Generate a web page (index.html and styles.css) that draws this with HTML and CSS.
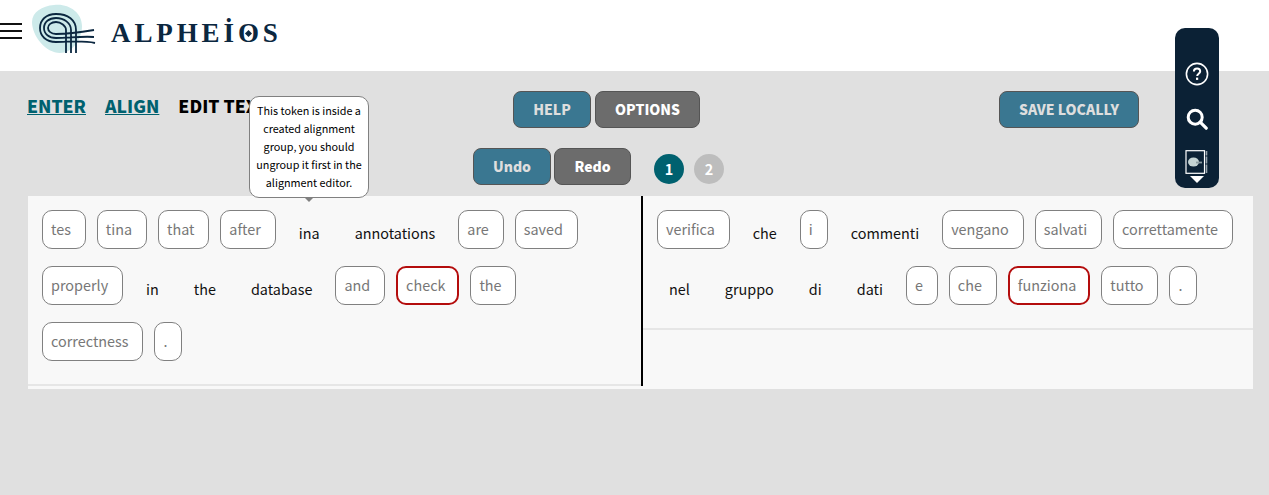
FILE: index.html
```html
<!DOCTYPE html>
<html lang="en">
<head>
<meta charset="utf-8">
<title>Alpheios</title>
<link rel="stylesheet" href="styles.css">
</head>
<body>
<header class="topbar">
  <div class="burger"><span></span><span></span><span></span></div>
  <svg class="logo-mark" width="66" height="56" viewBox="0 0 66 56" fill="none" stroke="#0b2740" stroke-width="1.8">
    <path d="M22 5C36 3 50 12 50 26C50 40 40 53 28 53C14 53 0 36 0 22C0 12 10 6 22 5z" fill="#cdeaea" stroke="none"/>
    <path d="M44 53V30C44 20 36 14 24 14C14 14 8 20 8 28C8 36 14 42 24 42C36 42 50 40 63 43"/>
    <path d="M39 53V30C39 23 32 18 24 18C17 18 12 22 12 28C12 34 17 38 24 38C36 38 50 36 62 37"/>
    <path d="M34 53V30C34 26 29 22 24 22C19 22 16 25 16 28C16 31 19 34 24 34C36 34 50 32 62 30"/>
  </svg>
  <div class="wordmark">ALPHEİ<span class="o-mark">O</span>S</div>
</header>

<main class="page">
  <div class="toolbar">
    <nav class="nav">
      <a class="nav-link" href="#">ENTER</a>
      <a class="nav-link" href="#">ALIGN</a>
      <span class="nav-current">EDIT TEXT</span>
    </nav>
    <div class="btn-group">
      <button class="btn btn-blue">HELP</button>
      <button class="btn btn-gray">OPTIONS</button>
    </div>
    <button class="btn btn-blue btn-save">SAVE LOCALLY</button>
  </div>

  <div class="subbar">
    <div class="btn-group narrow">
      <button class="btn btn-blue btn-undo">Undo</button>
      <button class="btn btn-gray btn-redo">Redo</button>
    </div>
    <div class="steps">
      <span class="step step-on">1</span>
      <span class="step step-off">2</span>
    </div>
  </div>

  <section class="editor">
    <div class="pane pane-left">
      <div class="tokens">
        <span class="tok box">tes</span>
        <span class="tok box">tina</span>
        <span class="tok box">that</span>
        <span class="tok box">after</span>
        <span class="tok plain">ina</span>
        <span class="tok plain">annotations</span>
        <span class="tok box">are</span>
        <span class="tok box">saved</span>
        <span class="tok box">properly</span>
        <span class="tok plain">in</span>
        <span class="tok plain">the</span>
        <span class="tok plain">database</span>
        <span class="tok box">and</span>
        <span class="tok box red">check</span>
        <span class="tok box">the</span>
        <span class="tok box">correctness</span>
        <span class="tok box">.</span>
      </div>
    </div>
    <div class="pane pane-right">
      <div class="tokens">
        <span class="tok box">verifica</span>
        <span class="tok plain">che</span>
        <span class="tok box">i</span>
        <span class="tok plain">commenti</span>
        <span class="tok box">vengano</span>
        <span class="tok box">salvati</span>
        <span class="tok box">correttamente</span>
        <span class="tok plain">nel</span>
        <span class="tok plain">gruppo</span>
        <span class="tok plain">di</span>
        <span class="tok plain">dati</span>
        <span class="tok box">e</span>
        <span class="tok box">che</span>
        <span class="tok box red">funziona</span>
        <span class="tok box">tutto</span>
        <span class="tok box">.</span>
      </div>
    </div>
  </section>
</main>

<div class="tooltip">This token is inside a created alignment group, you should ungroup it first in the alignment editor.</div>

<aside class="sidebar">
  <svg class="side-icon" width="24" height="24" viewBox="0 0 24 24" fill="none">
    <circle cx="12" cy="12" r="10.6" stroke="#fff" stroke-width="1.6"/>
    <path d="M8.9 9.6c0-2 1.4-3.1 3.2-3.1 1.9 0 3.1 1.1 3.1 2.8 0 2.4-3 2.5-3 4.7" stroke="#fff" stroke-width="2"/>
    <rect x="11" y="15.6" width="2.2" height="2.3" fill="#fff"/>
  </svg>
  <svg class="side-icon" width="22" height="22" viewBox="0 0 22 22" fill="none">
    <circle cx="9.2" cy="9.2" r="7" stroke="#fff" stroke-width="3"/>
    <path d="M14.2 14.2l6 6" stroke="#fff" stroke-width="3.2" stroke-linecap="round"/>
  </svg>
  <svg class="side-icon book" width="24" height="24" viewBox="0 0 24 24" fill="none">
    <rect x="1" y="0.7" width="18.5" height="22.6" stroke="#fff" stroke-width="1.2"/>
    <ellipse cx="8.5" cy="12" rx="5.5" ry="4.6" fill="#c4d3d3"/>
    <path d="M11 12.5h6" stroke="#8b9ba0" stroke-width="1.8"/>
    <path d="M21.5 1v22" stroke="#9aa6ae" stroke-width="1.6"/>
    <path d="M20 6h3M20 14h3" stroke="#0b2135" stroke-width="1"/>
  </svg>
  <span class="side-caret"></span>
</aside>
</body>
</html>
```
FILE: styles.css
```css
* { box-sizing: border-box; }
html, body { margin: 0; height: 100%; }
body {
  background: #e0e0e0;
  font-family: "Noto Sans CJK SC", "Noto Sans", sans-serif;
  color: #000;
  overflow: hidden;
}
.topbar {
  height: 71px;
  background: #fff;
  display: flex;
  align-items: flex-start;
}
.burger {
  width: 22px;
  margin-top: 23px;
  display: flex;
  flex-direction: column;
  gap: 5px;
}
.burger span { height: 2px; background: #111; display: block; }
.logo-mark { margin-left: 10px; flex: none; }
.wordmark {
  margin-left: 13px;
  margin-top: 14px;
  font-family: "Liberation Serif", serif;
  font-weight: 700;
  font-size: 27px;
  line-height: 38px;
  letter-spacing: 3.9px;
  color: #0b2740;
  white-space: nowrap;
}
.o-mark { position: relative; display: inline-block; }
.o-mark::after {
  content: "";
  position: absolute;
  left: 8px;
  top: 17px;
  width: 5px;
  height: 5px;
  background: #0b2740;
  transform: rotate(45deg);
}
.toolbar {
  display: flex;
  align-items: flex-start;
  padding: 20px 0 0 27px;
  height: 77px;
}
.nav {
  width: 486px;
  display: flex;
  gap: 19px;
  font-size: 17.5px;
  font-weight: 800;
  line-height: 30px;
  white-space: nowrap;
}
.nav-link { color: #00616f; text-decoration: underline; }
.btn-group { display: flex; gap: 4px; }
.btn {
  height: 37px;
  border: 1px solid #555;
  border-radius: 8px;
  font-family: inherit;
  font-weight: 900;
  font-size: 14px;
  padding: 0 0 2px;
}
.btn-blue { background: #3a7791; color: #dedede; width: 78px; }
.btn-gray { background: #6c6c6c; color: #fff; width: 105px; }
.btn-save { width: 140px; margin-left: 299px; }
.subbar {
  display: flex;
  align-items: flex-start;
  padding-left: 473px;
  height: 48px;
}
.narrow { gap: 3px; }
.btn-undo { width: 78px; }
.btn-redo { width: 77px; }
.steps { display: flex; gap: 10px; margin: 6px 0 0 23px; }
.step {
  width: 30px;
  height: 30px;
  border-radius: 50%;
  color: #fff;
  font-size: 14.4px;
  font-weight: 700;
  line-height: 30px;
  text-align: center;
}
.step-on { background: #00616f; }
.step-off { background: #bdbdbd; }
.editor {
  margin: 0 16px 0 28px;
  height: 193px;
  display: flex;
  background: #f8f8f8;
}
.pane { flex: none; }
.pane-left { width: 613px; height: 190px; }
.pane-right { flex: 1; border-left: 2px solid #000; height: 190px; }
.tokens {
  display: flex;
  flex-wrap: wrap;
  align-content: flex-start;
  gap: 17px 11px;
  padding: 14px 14px 0;
  border-bottom: 2px solid #e6e6e6;
}
.pane-left .tokens { height: 190px; }
.pane-right .tokens { height: 134px; }
.tok {
  height: 39px;
  font-size: 14.4px;
  line-height: 24px;
  white-space: nowrap;
}
.box {
  border: 1px solid #808080;
  border-radius: 10px;
  background: #fff;
  color: #777;
  padding: 6px 13.9px 0 8px;
}
.box.red { border: 2px solid #b40d0d; padding: 5px 12px 0 8px; }
.plain { padding: 11px 12px 0; color: #111; }
.tooltip {
  position: absolute;
  left: 249px;
  top: 96px;
  width: 120px;
  height: 102px;
  padding: 0 4px 2px;
  display: flex;
  align-items: center;
  text-align: center;
  background: #fff;
  border: 1px solid #808080;
  border-radius: 10px;
  font-size: 10.8px;
  line-height: 18px;
  color: #000;
}
.tooltip::after {
  content: "";
  position: absolute;
  left: 55px;
  bottom: -5px;
  border-left: 4px solid transparent;
  border-right: 4px solid transparent;
  border-top: 4px solid #808080;
}
.sidebar {
  position: absolute;
  left: 1175px;
  top: 28px;
  width: 44px;
  height: 160px;
  background: #0b2135;
  border-radius: 10px;
  display: flex;
  flex-direction: column;
  align-items: center;
  padding-top: 34px;
}
.side-icon { display: block; flex: none; }
.side-icon + .side-icon { margin-top: 22px; }
.side-icon.book { margin-top: 20px; }
.side-caret {
  margin-top: 2px;
  border-left: 7px solid transparent;
  border-right: 7px solid transparent;
  border-top: 7px solid #fff;
}
```
